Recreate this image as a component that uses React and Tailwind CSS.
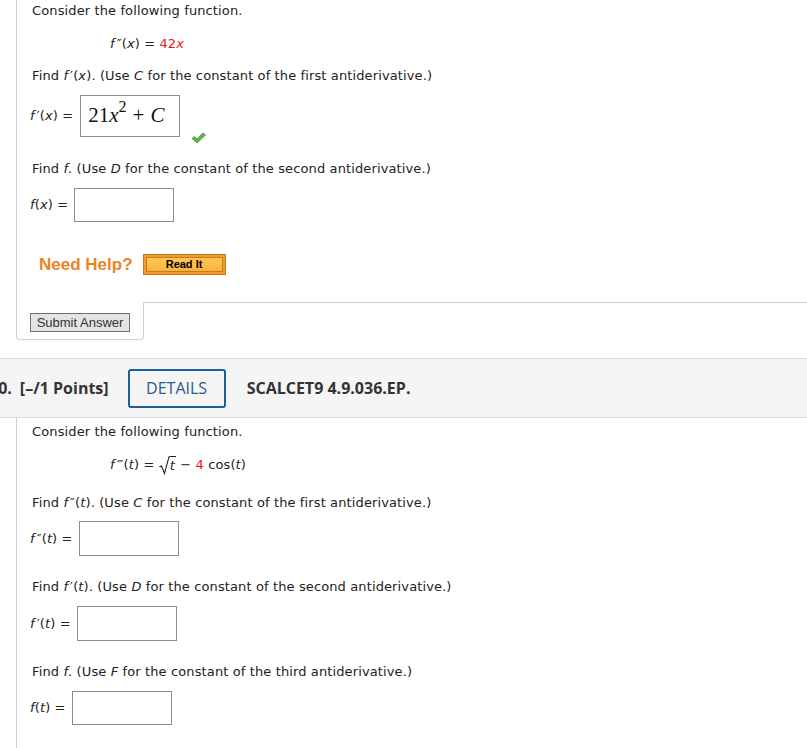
import React from 'react'

const ans = 'flex items-center gap-[6px] leading-[22px]'
const box = 'w-[100px] border border-[#8c8c8c] bg-white'

function P({ children }) {
  // prime marks sit a bit off the italic f
  return <span className="ml-[2px]">{children}</span>
}

function Check() {
  return (
    <svg width="15" height="12" viewBox="0 0 15 12">
      <path d="M1 6.5 L3.5 4.5 L6 7 L12 1 L14.5 3 L6 11 Z" fill="#5fb548" stroke="#3f8f33" strokeWidth="0.8" strokeLinejoin="round" />
    </svg>
  )
}

function Sqrt({ children }) {
  return (
    <span className="inline-flex items-stretch align-middle">
      <svg width="11" height="19" viewBox="0 0 11 19" className="shrink-0">
        <path d="M0.5 11 L2.5 10 L5.5 17.5 L10 0.8 L11 0.8" fill="none" stroke="#222" strokeWidth="1.1" />
      </svg>
      <span className="border-t border-[#222] pr-[1px] leading-[17px] mt-[0.3px]">{children}</span>
    </span>
  )
}

export default function App() {
  return (
    <div className="w-[807px] min-h-[748px] overflow-hidden bg-white text-[13px] tracking-[0.12px] text-[#222] font-['Verdana','DejaVu_Sans',sans-serif]">
      {/* first question body */}
      <div className="ml-4 border-l border-[#cfcfcf] pl-[15px] pb-[27px]">
        <p className="leading-[22px]">Consider the following function.</p>
        <p className="mt-[11px] ml-[78px] leading-[22px]">
          <i>f</i><P>″</P>(<i>x</i>) = <span className="text-[#e8161b]">42<i>x</i></span>
        </p>
        <p className="mt-[10px] leading-[22px]">
          Find <i>f</i><P>′</P>(<i>x</i>). (Use <i>C</i> for the constant of the first antiderivative.)
        </p>
        <div className="mt-[8px] flex items-start">
          <div className="flex items-center gap-[7px] h-[42px] -ml-[2px]">
            <span><i>f</i><P>′</P>(<i>x</i>) =</span>
            <div className={`${box} h-[42px] flex items-center pl-[7px] font-['Liberation_Serif','Times_New_Roman',serif] text-[21px] tracking-normal text-[#111]`}>
              21<i>x</i><sup className="text-[16px] -top-[0.55em]">2</sup>
              <span className="ml-[6px]">+</span>
              <i className="ml-[6px]">C</i>
            </div>
          </div>
          <div className="ml-[11px] mt-[37px]"><Check /></div>
        </div>
        <p className="mt-[14px] leading-[22px]">
          Find <i>f</i>. (Use <i>D</i> for the constant of the second antiderivative.)
        </p>
        <div className={`${ans} mt-[8px] -ml-[2px]`}>
          <span><i>f</i>(<i>x</i>) =</span>
          <div className={`${box} h-[34px]`} />
        </div>
        <div className="mt-[32px] ml-[7px] flex items-center gap-[10px] h-[21px] tracking-normal">
          <span className="font-['Liberation_Sans',Arial,sans-serif] font-bold text-[17px] text-[#ea8420]">Need Help?</span>
          <button className="w-[83px] h-[21px] border border-[#c6761f] bg-[#f39a2a] p-[2px]">
            <span className="flex h-full items-center justify-center border border-[#c77a22] bg-gradient-to-b from-[#ffc857] to-[#fdb23a] font-['Liberation_Sans',Arial,sans-serif] font-bold text-[11px] text-black">Read It</span>
          </button>
        </div>
      </div>

      {/* submit tab */}
      <div className="flex tracking-normal">
        <div className="ml-4 w-[128px] h-[38px] shrink-0 border-l border-r border-b border-[#cfcfcf] rounded-b-[4px] pl-[13px] pt-[11px]">
          <button className="w-[100px] h-[19px] border border-[#6f6f6f] bg-[#e4e4e4] font-['Liberation_Sans',Arial,sans-serif] text-[13px] leading-[17px] text-[#333]">Submit Answer</button>
        </div>
        <div className="flex-1 border-t border-[#cfcfcf]" />
      </div>

      {/* question header */}
      <div className="mt-[18px] h-[60px] border-y border-[#dcdcdc] bg-[#f5f5f5] flex items-center font-['Open_Sans',sans-serif] text-[16px] tracking-normal text-[#333]">
        <span className="-ml-[11px] font-bold">10.</span>
        <span className="ml-[8px] font-bold">[–/1 Points]</span>
        <span className="ml-[19px] w-[98px] h-[39px] flex items-center justify-center rounded-[3px] border-2 border-[#1d609a] text-[#2b5b8c]">DETAILS</span>
        <span className="ml-[21px] font-bold">SCALCET9 4.9.036.EP.</span>
      </div>

      {/* second question body */}
      <div className="ml-4 border-l border-[#cfcfcf] pl-[15px] pt-[3px] pb-[30px]">
        <p className="leading-[22px]">Consider the following function.</p>
        <p className="mt-[11px] ml-[78px] leading-[22px] flex items-center">
          <span><i>f</i><P>‴</P>(<i>t</i>) =&nbsp;</span>
          <Sqrt><i>t</i></Sqrt>
          <span>&nbsp;− <span className="text-[#e8161b]">4</span> cos(<i>t</i>)</span>
        </p>
        <p className="mt-[16px] leading-[22px]">
          Find <i>f</i><P>″</P>(<i>t</i>). (Use <i>C</i> for the constant of the first antiderivative.)
        </p>
        <div className={`${ans} mt-[7px] -ml-[2px]`}>
          <span><i>f</i><P>″</P>(<i>t</i>) =</span>
          <div className={`${box} h-[35px]`} />
        </div>
        <p className="mt-[20px] leading-[22px]">
          Find <i>f</i><P>′</P>(<i>t</i>). (Use <i>D</i> for the constant of the second antiderivative.)
        </p>
        <div className={`${ans} mt-[8px] -ml-[2px]`}>
          <span><i>f</i><P>′</P>(<i>t</i>) =</span>
          <div className={`${box} h-[35px]`} />
        </div>
        <p className="mt-[20px] leading-[22px]">
          Find <i>f</i>. (Use <i>F</i> for the constant of the third antiderivative.)
        </p>
        <div className={`${ans} mt-[8px] -ml-[2px]`}>
          <span><i>f</i>(<i>t</i>) =</span>
          <div className={`${box} h-[34px]`} />
        </div>
      </div>
    </div>
  )
}
